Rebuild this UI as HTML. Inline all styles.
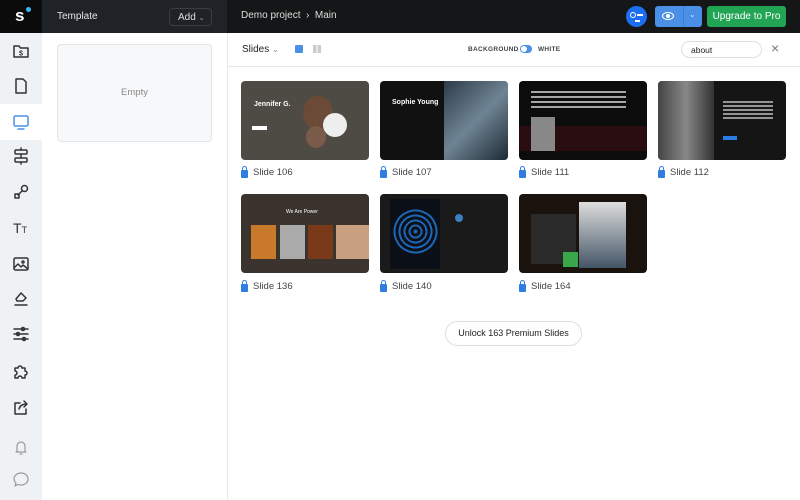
<!DOCTYPE html>
<html><head><style>
*{box-sizing:border-box;margin:0;padding:0}
body{width:800px;height:500px;overflow:hidden;font-family:"Liberation Sans",sans-serif;background:#fff;position:relative;font-size:12px}
.a{position:absolute}
.th{position:absolute;width:128px;height:79px;border-radius:4px;overflow:hidden;background:#111}
.lb{position:absolute;font-size:9.5px;color:#444;display:flex;align-items:center;gap:5px}
.lk{width:7px;height:8px;background:#2f7de1;border-radius:1px;position:relative;margin-top:2px}
.lk:before{content:"";position:absolute;left:1px;top:-4px;width:3px;height:4px;border:1px solid #2f7de1;border-bottom:none;border-radius:3px 3px 0 0}
svg.ic{position:absolute;left:12px;width:18px;height:18px;fill:none;stroke:#333;stroke-width:1.5;stroke-linecap:round;stroke-linejoin:round}
</style></head><body>
<!-- header -->
<div class="a" style="left:0;top:0;width:42px;height:33px;background:#0b0b0b"></div>
<div class="a" style="left:15px;top:6px;color:#fff;font-weight:bold;font-size:17px">s</div>
<div class="a" style="left:26px;top:7px;width:5px;height:5px;border-radius:50%;background:#38b6f0"></div>
<div class="a" style="left:42px;top:0;width:185px;height:33px;background:#1f2226"></div>
<div class="a" style="left:57px;top:11px;color:#e6e6e6;font-size:10px">Template</div>
<div class="a" style="left:169px;top:8px;width:43px;height:18px;border:1px solid #3a3d42;border-radius:4px;color:#ddd;font-size:10px;padding:3px 0 0 8px">Add <span style="font-size:7px;color:#aaa">&#8964;</span></div>
<div class="a" style="left:227px;top:0;width:573px;height:33px;background:#151617"></div>
<div class="a" style="left:241px;top:10px;color:#ddd;font-size:10px">Demo project &nbsp;›&nbsp; Main</div>
<div class="a" style="left:626px;top:6px;width:21px;height:21px;border-radius:50%;background:#1d6ff2"></div>
<div class="a" style="left:630px;top:12px;width:6px;height:6px;border:1.5px solid #fff;border-radius:50%"></div>
<div class="a" style="left:637px;top:14px;width:6px;height:1.5px;background:#fff"></div>
<div class="a" style="left:635px;top:20px;width:5px;height:1.5px;background:#fff"></div>
<div class="a" style="left:655px;top:6px;width:47px;height:21px;border-radius:3px;background:#4a90e6"></div>
<div class="a" style="left:683px;top:6px;width:1px;height:21px;background:#3d7fd2"></div>
<div class="a" style="left:662px;top:12px;width:12px;height:8px;border:1.5px solid #fff;border-radius:50%"></div>
<div class="a" style="left:666px;top:14px;width:4px;height:4px;background:#fff;border-radius:50%"></div>
<div class="a" style="left:689px;top:10px;color:#dce8fa;font-size:8px">&#8964;</div>
<div class="a" style="left:707px;top:6px;width:79px;height:21px;border-radius:3px;background:#22a455;color:#fff;font-size:10px;text-align:center;line-height:21px">Upgrade to Pro</div>
<!-- sidebar -->
<div class="a" style="left:0;top:33px;width:42px;height:467px;background:#eff2f5"></div>
<div class="a" style="left:0;top:104px;width:42px;height:36px;background:#fff"></div>
<svg class="ic" style="top:42px" viewBox="0 0 18 18"><path d="M2 4h5l1.5 2H16v9H2z"/><text x="9" y="13.5" font-size="7" font-weight="bold" fill="#333" stroke="none" text-anchor="middle" font-family="Liberation Sans">$</text></svg>
<svg class="ic" style="top:77px" viewBox="0 0 18 18"><path d="M4 2h7l3 3v11H4z"/></svg>
<svg class="ic" style="top:113px;stroke:#4a90e6" viewBox="0 0 18 18"><rect x="2" y="3" width="14" height="10" rx="1.5"/><path d="M6 16h6"/></svg>
<svg class="ic" style="top:147px" viewBox="0 0 18 18"><rect x="3" y="3" width="12" height="4" rx="1"/><rect x="3" y="11" width="12" height="4" rx="1"/><path d="M9 1v2M9 7v4M9 15v2"/></svg>
<svg class="ic" style="top:183px" viewBox="0 0 18 18"><circle cx="12.5" cy="5.5" r="3"/><path d="M10 8l-4 4M3 11h4v4H3z"/></svg>
<div class="a" style="left:13px;top:220px;font-size:14px;color:#333">T<span style="font-size:9px">T</span></div>
<svg class="ic" style="top:255px" viewBox="0 0 18 18"><rect x="2" y="3" width="14" height="12" rx="1.5"/><path d="M2 13l4-4 3 3 2-2 5 4"/><circle cx="11" cy="7" r="1"/></svg>
<svg class="ic" style="top:289px" viewBox="0 0 18 18"><path d="M4 10l5-6 5 5-3 3H5z"/><path d="M3 16h12"/></svg>
<svg class="ic" style="top:325px" viewBox="0 0 18 18"><path d="M2 4h14M2 9h14M2 14h14"/><circle cx="11" cy="4" r="1.5"/><circle cx="6" cy="9" r="1.5"/><circle cx="12" cy="14" r="1.5"/></svg>
<svg class="ic" style="top:362px" viewBox="0 0 18 18"><path d="M3 6h3a2 2 0 1 1 4 0h3v3a2 2 0 1 1 0 4v3H10a2 2 0 1 0-4 0H3v-3a2 2 0 1 0 0-4z"/></svg>
<svg class="ic" style="top:398px" viewBox="0 0 18 18"><path d="M8 5H3v11h11v-5"/><path d="M7 11c1-4 4-5 8-5M12 3l3 3-3 3"/></svg>
<svg class="ic" style="top:438px;stroke:#999;stroke-width:1.2" viewBox="0 0 18 18"><path d="M5 13V8a4 4 0 0 1 8 0v5l1 1H4zM8 16h2"/></svg>
<svg class="ic" style="top:470px;stroke:#999;stroke-width:1.2" viewBox="0 0 18 18"><path d="M9 3c4 0 7 2.5 7 6s-3 6-7 6c-1 0-2 0-3-.5L3 16l1-3C3 12 2 10.5 2 9c0-3.5 3-6 7-6z"/></svg>
<!-- template panel -->
<div class="a" style="left:42px;top:33px;width:186px;height:467px;background:#fff;border-right:1px solid #e6e8eb"></div>
<div class="a" style="left:57px;top:44px;width:155px;height:98px;background:#f7f8f9;border:1px solid #e3e5e8;border-radius:4px;color:#888;font-size:9.5px;text-align:center;line-height:96px">Empty</div>
<!-- toolbar -->
<div class="a" style="left:228px;top:66px;width:572px;height:1px;background:#e6e8eb"></div>
<div class="a" style="left:242px;top:44px;font-size:10px;color:#222">Slides <span style="font-size:8px;color:#888">&#8964;</span></div>
<div class="a" style="left:295px;top:45px;width:8px;height:8px;background:#4a90e6;border-radius:1px"></div>
<div class="a" style="left:313px;top:45px;width:8px;height:8px;background:repeating-linear-gradient(90deg,#ccc 0 3.5px,transparent 3.5px 4.5px)"></div>
<div class="a" style="left:468px;top:46px;font-size:6.5px;font-weight:bold;color:#444;letter-spacing:.3px">BACKGROUND</div>
<div class="a" style="left:520px;top:45px;width:12px;height:8px;border-radius:4px;background:#4a90e6"></div>
<div class="a" style="left:521px;top:46px;width:6px;height:6px;border-radius:50%;background:#fff"></div>
<div class="a" style="left:538px;top:46px;font-size:6.5px;font-weight:bold;color:#444;letter-spacing:.3px">WHITE</div>
<div class="a" style="left:681px;top:41px;width:81px;height:17px;border:1px solid #dcdfe3;border-radius:9px;font-size:8.5px;color:#222;padding:3px 0 0 9px">about</div>
<div class="a" style="left:771px;top:40px;font-size:14px;color:#777">×</div>
<!-- thumbs row 1 -->
<div class="th" style="left:241px;top:81px;background:#4e4a44"><div class="a" style="left:13px;top:20px;color:#fff;font-size:7px;font-weight:bold">Jennifer G.</div><div class="a" style="left:62px;top:15px;width:30px;height:34px;border-radius:50%;background:#6b4a38"></div><div class="a" style="left:82px;top:32px;width:24px;height:24px;border-radius:50%;background:#eee"></div><div class="a" style="left:65px;top:45px;width:20px;height:22px;border-radius:50%;background:#7a5a48"></div><div class="a" style="left:11px;top:45px;width:15px;height:4px;background:#fff"></div></div>
<div class="th" style="left:380px;top:81px;background:#111"><div class="a" style="left:12px;top:18px;color:#fff;font-size:7px;font-weight:bold">Sophie Young</div><div class="a" style="left:64px;top:0;width:64px;height:79px;background:linear-gradient(135deg,#2d3b48,#6f8494 50%,#1e2a34)"></div></div>
<div class="th" style="left:519px;top:81px;background:#0c0c0c"><div class="a" style="left:12px;top:10px;width:95px;height:18px;background:repeating-linear-gradient(#ccc 0 2px,transparent 2px 5px);opacity:.8"></div><div class="a" style="left:0;top:45px;width:128px;height:25px;background:#2a0d10"></div><div class="a" style="left:12px;top:36px;width:24px;height:34px;background:#888"></div></div>
<div class="th" style="left:658px;top:81px;background:#151515"><div class="a" style="left:0;top:0;width:56px;height:79px;background:linear-gradient(90deg,#444,#888,#333)"></div><div class="a" style="left:65px;top:20px;width:50px;height:20px;background:repeating-linear-gradient(#ccc 0 2px,transparent 2px 4px);opacity:.7"></div><div class="a" style="left:65px;top:55px;width:14px;height:4px;background:#2a7ce6"></div></div>
<div class="lb" style="left:241px;top:167px"><div class="lk"></div>Slide 106</div>
<div class="lb" style="left:380px;top:167px"><div class="lk"></div>Slide 107</div>
<div class="lb" style="left:519px;top:167px"><div class="lk"></div>Slide 111</div>
<div class="lb" style="left:658px;top:167px"><div class="lk"></div>Slide 112</div>
<!-- row 2 -->
<div class="th" style="left:241px;top:194px;background:#3a332e"><div class="a" style="left:10px;top:31px;width:25px;height:34px;background:#c87a2a"></div><div class="a" style="left:39px;top:31px;width:25px;height:34px;background:#aaa"></div><div class="a" style="left:67px;top:31px;width:25px;height:34px;background:#7a3a1a"></div><div class="a" style="left:95px;top:31px;width:33px;height:34px;background:#c8a080"></div><div class="a" style="left:45px;top:15px;color:#fff;font-size:5px">We Are Power</div></div>
<div class="th" style="left:380px;top:194px;background:#1a1a1a"><div class="a" style="left:10px;top:5px;width:50px;height:70px;background:#0b1018"></div><div class="a" style="left:13px;top:15px;width:45px;height:45px;border-radius:50%;background:repeating-radial-gradient(#1c66b5 0 2px,#0b1018 2px 5px)"></div><div class="a" style="left:75px;top:20px;width:8px;height:8px;border-radius:50%;background:#3a80c0"></div></div>
<div class="th" style="left:519px;top:194px;background:#1a120c"><div class="a" style="left:12px;top:20px;width:45px;height:50px;background:#2a2a2a"></div><div class="a" style="left:60px;top:8px;width:47px;height:66px;background:linear-gradient(#ddd,#456)"></div><div class="a" style="left:44px;top:58px;width:15px;height:15px;background:#3aa64a"></div></div>
<div class="lb" style="left:241px;top:281px"><div class="lk"></div>Slide 136</div>
<div class="lb" style="left:380px;top:281px"><div class="lk"></div>Slide 140</div>
<div class="lb" style="left:519px;top:281px"><div class="lk"></div>Slide 164</div>
<div class="a" style="left:445px;top:321px;width:137px;height:25px;border:1px solid #dcdfe3;border-radius:13px;font-size:9px;color:#222;text-align:center;line-height:23px">Unlock 163 Premium Slides</div>
</body></html>
